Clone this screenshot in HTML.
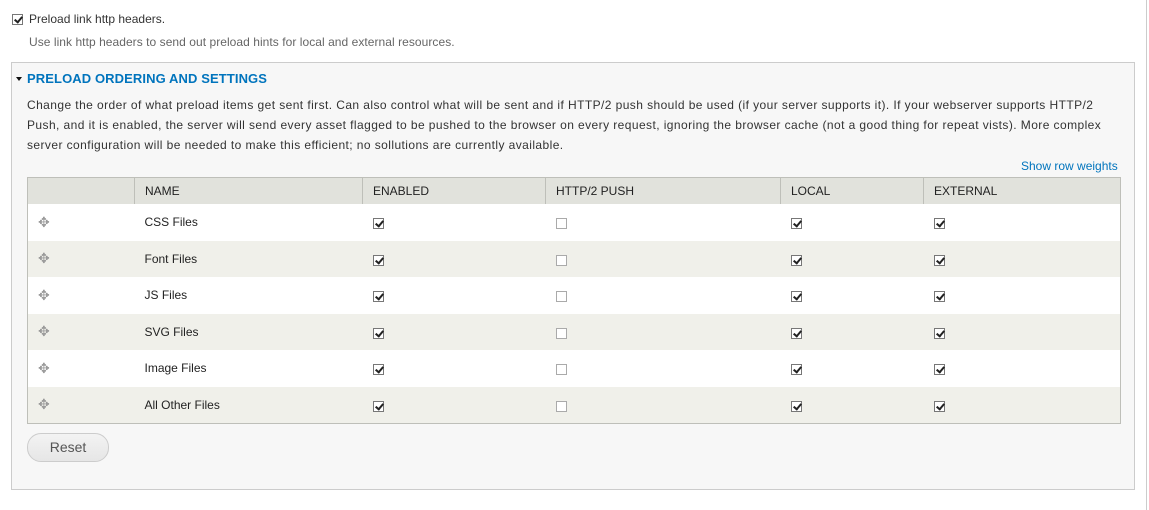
<!DOCTYPE html>
<html><head><style>
body{margin:0;width:1149px;height:510px;background:#fff;font-family:"Liberation Sans",sans-serif;font-size:12px;color:#333;position:relative;overflow:hidden}
.abs{position:absolute}
.cb{position:absolute;width:11px;height:11px;border:1px solid #777;background:#fff;box-sizing:border-box}
.cb.on::after{content:"";position:absolute;left:3px;top:0px;width:3px;height:6px;border:solid #222;border-width:0 2px 2px 0;transform:rotate(40deg)}
.cb.off{border-color:#aaa}
.fs{position:absolute;left:11px;top:62px;width:1122px;height:426px;border:1px solid #ccc;background:#f7f7f7}
table{position:absolute;left:27px;top:177px;width:1094px;border-collapse:collapse;border:1px solid #bebfb9}
th{background:#e1e2dc;height:26px;text-align:left;font-weight:normal;padding:0 0 0 10px;border-left:1px solid #bebfb9;color:#222}
th:first-child{border-left:none}
td{height:36.5px;padding:0 0 0 10px;position:relative;color:#222}
tr.e td{background:#f0f0ea}
tr.o td{background:#fff}
td .cb{top:14px;left:10px}
.drag{color:#999;font-size:14px;font-weight:300}
</style></head><body>
<div class="cb on" style="left:12px;top:14px"></div>
<div class="abs" style="left:29px;top:12px;color:#333">Preload link http headers.</div>
<div class="abs" style="left:29px;top:35px;color:#666;letter-spacing:0.05px">Use link http headers to send out preload hints for local and external resources.</div>
<div class="abs" style="left:1146px;top:0;width:1px;height:510px;background:#ccc"></div>
<div class="fs"></div>
<div class="abs" style="left:16px;top:77px;width:0;height:0;border-left:3px solid transparent;border-right:3px solid transparent;border-top:4px solid #111"></div>
<div class="abs" style="left:27px;top:71px;color:#0074bd;font-size:13px;font-weight:bold;letter-spacing:0.1px">PRELOAD ORDERING AND SETTINGS</div>
<div class="abs" style="left:27px;top:95px;line-height:20px;color:#333;white-space:nowrap;letter-spacing:0.42px">Change the order of what preload items get sent first. Can also control what will be sent and if HTTP/2 push should be used (if your server supports it). If your webserver supports HTTP/2<br>Push, and it is enabled, the server will send every asset flagged to be pushed to the browser on every request, ignoring the browser cache (not a good thing for repeat vists). More complex<br>server configuration will be needed to make this efficient; no sollutions are currently available.</div>
<div class="abs" style="left:1021px;top:159px;color:#0074bd">Show row weights</div>
<table>
<tr><th style="width:96px"></th><th style="width:217px">NAME</th><th style="width:172px">ENABLED</th><th style="width:224px">HTTP/2 PUSH</th><th style="width:132px">LOCAL</th><th>EXTERNAL</th></tr>
<tr class="o"><td class="drag">✥</td><td>CSS Files</td><td><div class="cb on"></div></td><td><div class="cb off"></div></td><td><div class="cb on"></div></td><td><div class="cb on"></div></td></tr>
<tr class="e"><td class="drag">✥</td><td>Font Files</td><td><div class="cb on"></div></td><td><div class="cb off"></div></td><td><div class="cb on"></div></td><td><div class="cb on"></div></td></tr>
<tr class="o"><td class="drag">✥</td><td>JS Files</td><td><div class="cb on"></div></td><td><div class="cb off"></div></td><td><div class="cb on"></div></td><td><div class="cb on"></div></td></tr>
<tr class="e"><td class="drag">✥</td><td>SVG Files</td><td><div class="cb on"></div></td><td><div class="cb off"></div></td><td><div class="cb on"></div></td><td><div class="cb on"></div></td></tr>
<tr class="o"><td class="drag">✥</td><td>Image Files</td><td><div class="cb on"></div></td><td><div class="cb off"></div></td><td><div class="cb on"></div></td><td><div class="cb on"></div></td></tr>
<tr class="e"><td class="drag">✥</td><td>All Other Files</td><td><div class="cb on"></div></td><td><div class="cb off"></div></td><td><div class="cb on"></div></td><td><div class="cb on"></div></td></tr>
</table>
<div class="abs" style="left:27px;top:433px;width:80px;height:27px;border:1px solid #ccc;border-radius:14px;background:linear-gradient(#f3f3f3,#e6e6e6);text-align:center;line-height:27px;font-size:14px;color:#555">Reset</div>
</body></html>
